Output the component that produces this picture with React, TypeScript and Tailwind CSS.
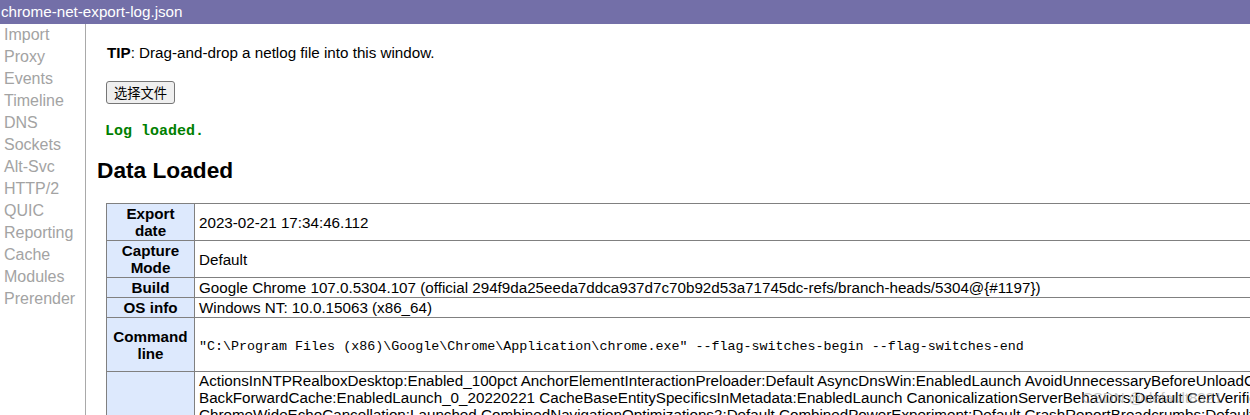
const TABS = ['Import', 'Proxy', 'Events', 'Timeline', 'DNS', 'Sockets', 'Alt-Svc', 'HTTP/2', 'QUIC', 'Reporting', 'Cache', 'Modules', 'Prerender'];

const thClass = 'w-[88px] border border-[#808080] bg-[#dde9fd] px-px py-0 text-center align-middle text-[15.2px] leading-[17px] font-bold text-black';
const tdClass = 'border border-[#808080] px-1 py-0 align-middle leading-[17px] whitespace-nowrap text-black';

export default function App() {
  return (
    <div className="relative h-[415px] w-[1250px] overflow-hidden bg-white font-['Liberation_Sans',Arial,sans-serif] text-black">
      <div className="h-6 bg-[#736fa8] pl-px text-[15.2px] leading-[23px] whitespace-nowrap text-white">chrome-net-export-log.json</div>
      <div className="flex h-[391px]">
        <nav className="w-[86px] shrink-0 border-r border-[#a9a9a9] pl-1">
          {TABS.map((t) => (
            <div key={t} className="h-[22px] text-[16px] leading-[22px] text-[#a3a3a3]">{t}</div>
          ))}
        </nav>
        <main className="min-w-0 flex-1 pl-[11px]">
          <p className="mt-5 ml-[10px] text-[15.2px] leading-[17px]"><b>TIP</b>: Drag-and-drop a netlog file into this window.</p>
          <button type="button" className="mt-5 ml-[9px] block h-[23px] w-[69px] rounded-[3px] border border-[#767676] bg-[#efefef] text-center font-['Noto_Sans_CJK_SC',sans-serif] text-[13.3px] leading-[21px] text-black">选择文件</button>
          <div className="mt-[19px] ml-2 font-['Liberation_Mono',monospace] text-[15px] leading-[17px] font-bold text-[#008000]">Log loaded.</div>
          <h1 className="mt-4 text-[22.7px] leading-[28px] font-bold">Data Loaded</h1>
          <table className="mt-[19px] ml-[9px] w-[1300px] border-collapse text-[15.2px]">
            <tbody>
              <tr className="h-[37px]"><th className={thClass}>Export<br />date</th><td className={tdClass}>2023-02-21 17:34:46.112</td></tr>
              <tr className="h-[37px]"><th className={thClass}>Capture<br />Mode</th><td className={tdClass}>Default</td></tr>
              <tr className="h-5"><th className={thClass}>Build</th><td className={tdClass}>Google Chrome 107.0.5304.107 (official 294f9da25eeda7ddca937d7c70b92d53a71745dc-refs/branch-heads/5304@{'{'}#1197{'}'})</td></tr>
              <tr className="h-5"><th className={thClass}>OS info</th><td className={tdClass}>Windows NT: 10.0.15063 (x86_64)</td></tr>
              <tr className="h-[54px]"><th className={thClass}>Command<br />line</th><td className={`${tdClass} pt-1 font-['Liberation_Mono',monospace] text-[13.35px]`}>"C:\Program Files (x86)\Google\Chrome\Application\chrome.exe" --flag-switches-begin --flag-switches-end</td></tr>
              <tr><th className={thClass}></th><td className={`${tdClass} align-top`}>
                <div>ActionsInNTPRealboxDesktop:Enabled_100pct AnchorElementInteractionPreloader:Default AsyncDnsWin:EnabledLaunch AvoidUnnecessaryBeforeUnloadCheckSync:Default</div>
                <div>BackForwardCache:EnabledLaunch_0_20220221 CacheBaseEntitySpecificsInMetadata:EnabledLaunch CanonicalizationServerBehaviors:Default CertVerifierBuiltin:Default</div>
                <div>ChromeWideEchoCancellation:Launched CombinedNavigationOptimizations2:Default CombinedPowerExperiment:Default CrashReportBreadcrumbs:Default</div>
              </td></tr>
            </tbody>
          </table>
        </main>
      </div>
      <div className="absolute top-[389px] left-[1082px] text-[15px] leading-[17px] whitespace-nowrap text-[#9a9a9a]/60">CSDN @default8321</div>
    </div>
  );
}
